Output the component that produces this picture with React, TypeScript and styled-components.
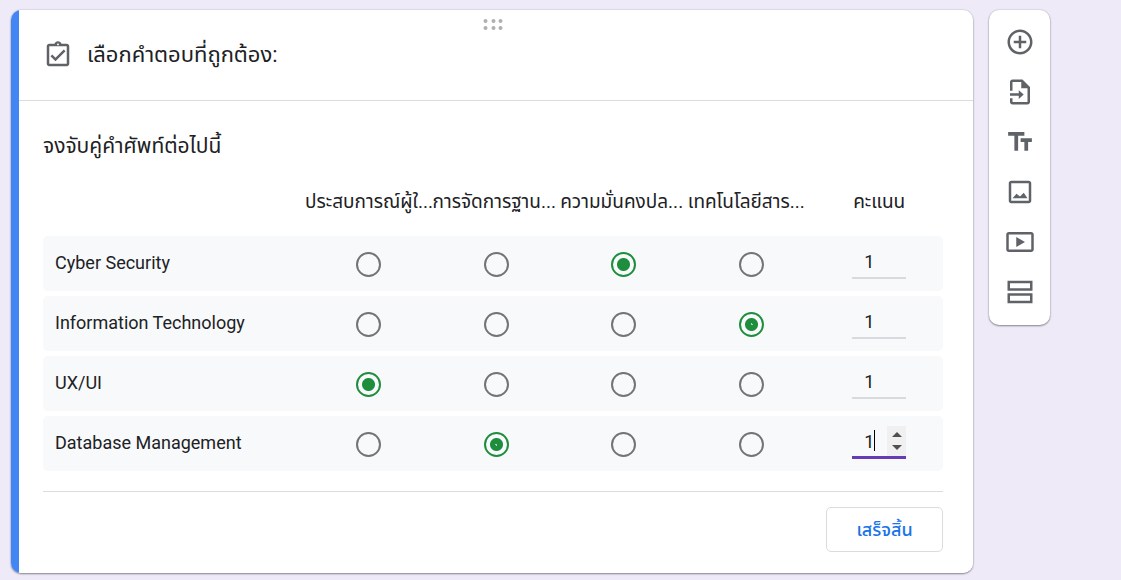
import React, { useState } from 'react';
import styled, { createGlobalStyle, css } from 'styled-components';

const GlobalStyle = createGlobalStyle`
  * { box-sizing: border-box; }
  body {
    margin: 0;
    background: #eeeaf8;
    color: #202124;
    font-family: Roboto, "Noto Sans Thai", "Noto Sans", sans-serif;
    font-size: 18px;
  }
`;

const Page = styled.div`
  display: flex;
  align-items: flex-start;
  gap: 16px;
  padding: 10px 71px 6px 11px;
`;

const raised = css`
  background: #fff;
  border-radius: 10px;
  box-shadow: 0 1px 2px rgba(0, 0, 0, 0.4), 0 0 2px rgba(0, 0, 0, 0.2);
`;

const Card = styled.main`
  ${raised}
  flex: 1;
  min-width: 0;
  padding-left: 8px;
  background: linear-gradient(to right, #4285f4 8px, #fff 8px);
`;

const CardHeader = styled.header`
  display: flex;
  flex-direction: column;
  height: 91px;
  border-bottom: 1px solid #dadce0;
`;

const DragHandle = styled.div`
  display: flex;
  justify-content: center;
  height: 20px;
  padding: 9px 6px 0 0;
`;

const TitleRow = styled.div`
  display: flex;
  align-items: center;
  gap: 14px;
  height: 50px;
  padding-left: 24px;
  color: #5f6368;
`;

const Title = styled.h1`
  margin: 0;
  color: #202124;
  font-size: 22px;
  line-height: 30px;
  font-weight: 400;
`;

const CardBody = styled.div`
  padding: 30px 30px 21px 24px;
`;

const Question = styled.h2`
  margin: 0 0 24px;
  font-size: 21px;
  line-height: 30px;
  font-weight: 400;
`;

const Grid = styled.table`
  width: 100%;
  table-layout: fixed;
  border-collapse: separate;
  border-spacing: 0 5px;
`;

const LabelHead = styled.th`
  width: 262px;
`;

const OptionHead = styled.th<{ $center?: boolean }>`
  height: 41px;
  padding: 0;
  font-size: 19px;
  line-height: 24px;
  font-weight: 400;
  vertical-align: top;
  white-space: nowrap;
  text-align: ${(p) => (p.$center ? 'center' : 'left')};
`;

const Cell = styled.td`
  height: 55px;
  padding: 0;
  background: #f8f9fb;
  text-align: center;
  vertical-align: middle;
  &:last-child { border-radius: 0 5px 5px 0; }
`;

const RowLabel = styled.th`
  padding: 0 12px 2px;
  border-radius: 5px 0 0 5px;
  background: #f8f9fb;
  font-weight: 400;
  text-align: left;
`;

const Radio = styled.input<{ $pinhole: boolean }>`
  appearance: none;
  display: block;
  width: 25px;
  height: 25px;
  margin: 2px auto 0;
  border: 2px solid #737476;
  border-radius: 50%;
  &:checked {
    border-color: #1e8e3e;
    background: radial-gradient(
      circle,
      ${(p) => (p.$pinhole ? '#a5d3b1 0 1px,' : '')} #1e8e3e 1px 6px, transparent 7px
    );
  }
`;

const ScoreField = styled.div<{ $active: boolean }>`
  position: relative;
  display: flex;
  width: 54px;
  height: 33px;
  margin: 0 auto 2px;
  border-bottom: ${(p) => (p.$active ? '3px solid #673ab7' : '2px solid #d9dadd')};
`;

const ScoreInput = styled.input`
  appearance: textfield;
  width: 35px;
  height: 30px;
  padding: 0 0 0 12px;
  border: 0;
  outline: 0;
  background: transparent;
  color: #202124;
  caret-color: transparent;
  font: inherit;
  &::-webkit-inner-spin-button { appearance: none; margin: 0; }
`;

const Caret = styled.span`
  position: absolute;
  left: 22px;
  top: 4px;
  width: 1px;
  height: 21px;
  background: #000;
`;

const Stepper = styled.div`
  display: flex;
  flex-direction: column;
  width: 19px;
  padding: 2px 0;
  background: #f0f0f0;
`;

const Step = styled.button`
  display: flex;
  flex: 1;
  align-items: center;
  justify-content: center;
  padding: 0;
  border: 0;
  background: transparent;
  color: #505050;
`;

const Footer = styled.footer`
  display: flex;
  justify-content: flex-end;
  margin-top: 15px;
  padding-top: 15px;
  border-top: 1px solid #dadce0;
`;

const DoneButton = styled.button`
  width: 117px;
  height: 45px;
  padding: 0;
  border: 1px solid #dadce0;
  border-radius: 5px;
  background: #fff;
  color: #1a73e8;
  font: 500 18px/24px Roboto, "Noto Sans Thai", "Noto Sans", sans-serif;
`;

const Toolbar = styled.nav`
  ${raised}
  display: flex;
  flex-direction: column;
  align-items: center;
  width: 61px;
  padding: 7px 0 8px;
`;

const Tool = styled.button`
  display: flex;
  align-items: center;
  justify-content: center;
  width: 50px;
  height: 50px;
  padding: 0;
  border: 0;
  background: transparent;
  color: #5f6368;
`;

const Icon = ({ d, size = 30 }: { d: string; size?: number }) => (
  <svg width={size} height={size} viewBox="0 0 24 24" fill="currentColor" aria-hidden="true">
    <path fillRule="evenodd" d={d} />
  </svg>
);

const CLIPBOARD =
  'M19 3h-4.18C14.4 1.84 13.3 1 12 1s-2.4.84-2.82 2H5c-1.1 0-2 .9-2 2v14c0 1.1.9 2 2 2h14c1.1 0 2-.9 2-2V5c0-1.1-.9-2-2-2zm-7-.25c.41 0 .75.34.75.75s-.34.75-.75.75-.75-.34-.75-.75.34-.75.75-.75zM19 19H5V5h14v14zM17.99 9l-1.41-1.42-6.59 6.59-2.58-2.57-1.42 1.41 4 3.99z';

const tools = [
  {
    name: 'เพิ่มคำถาม',
    d: 'M13 7h-2v4H7v2h4v4h2v-4h4v-2h-4V7zm-1-5C6.48 2 2 6.48 2 12s4.48 10 10 10 10-4.48 10-10S17.52 2 12 2zm0 18c-4.41 0-8-3.59-8-8s3.59-8 8-8 8 3.59 8 8-3.59 8-8 8z',
  },
  {
    name: 'นำเข้าคำถาม',
    d: 'M14 2H6c-1.1 0-2 .9-2 2v7h2V4h7v5h5v11H6v-3H4v3c0 1.1.9 2 2 2h12c1.1 0 2-.9 2-2V8l-6-6zM4 13v2h7v2.5l4-3.5-4-3.5V13H4z',
  },
  { name: 'เพิ่มชื่อและรายละเอียด', d: 'M2.5 4v3h5v12h3V7h5V4h-13zm19 5h-9v3h3v7h3v-7h3V9z' },
  {
    name: 'เพิ่มรูปภาพ',
    d: 'M19 5v14H5V5h14m0-2H5c-1.1 0-2 .9-2 2v14c0 1.1.9 2 2 2h14c1.1 0 2-.9 2-2V5c0-1.1-.9-2-2-2zM15 12.5l-3 3L9.2 13.3 6 17h12z',
  },
  {
    name: 'เพิ่มวิดีโอ',
    d: 'M21 4H3c-1.1 0-2 .9-2 2v12c0 1.1.9 2 2 2h18c1.1 0 2-.9 2-2V6c0-1.1-.9-2-2-2zm0 14H3V6h18v12zM9 8v8l7-4z',
  },
  { name: 'เพิ่มส่วน', d: 'M2 3v8h20V3H2zm18 6H4V5h16v4zM2 13v8h20v-8H2zm18 6H4v-4h16v4z' },
];

const options = ['ประสบการณ์ผู้ใ...', 'การจัดการฐาน...', 'ความมั่นคงปล...', 'เทคโนโลยีสาร...'];

const questions = [
  { label: 'Cyber Security', answer: 2 },
  { label: 'Information Technology', answer: 3 },
  { label: 'UX/UI', answer: 0 },
  { label: 'Database Management', answer: 1 },
];

export default function App() {
  const [answers, setAnswers] = useState(questions.map((q) => q.answer));
  const [scores, setScores] = useState(questions.map(() => 1));
  const activeRow = 3;

  const setScore = (row: number, value: number) =>
    setScores(scores.map((s, i) => (i === row ? Math.max(0, value) : s)));

  return (
    <>
      <GlobalStyle />
      <Page>
        <Card>
          <CardHeader>
            <DragHandle>
              <svg width="20" height="11" viewBox="0 0 20 11" fill="#b0b0b0" aria-hidden="true">
                {[2, 10, 17].map((x) =>
                  [2, 9].map((y) => <circle key={`${x}-${y}`} cx={x + 0.5} cy={y} r="2" />),
                )}
              </svg>
            </DragHandle>
            <TitleRow>
              <Icon d={CLIPBOARD} />
              <Title>เลือกคำตอบที่ถูกต้อง:</Title>
            </TitleRow>
          </CardHeader>
          <CardBody>
            <Question>จงจับคู่คำศัพท์ต่อไปนี้</Question>
            <Grid>
              <thead>
                <tr>
                  <LabelHead />
                  {options.map((o) => (
                    <OptionHead key={o} scope="col">{o}</OptionHead>
                  ))}
                  <OptionHead scope="col" $center>คะแนน</OptionHead>
                </tr>
              </thead>
              <tbody>
                {questions.map((q, row) => (
                  <tr key={q.label}>
                    <RowLabel scope="row">{q.label}</RowLabel>
                    {options.map((o, col) => (
                      <Cell key={o}>
                        <Radio
                          type="radio"
                          name={`row-${row}`}
                          aria-label={`${q.label}: ${o}`}
                          checked={answers[row] === col}
                          onChange={() => setAnswers(answers.map((a, i) => (i === row ? col : a)))}
                          $pinhole={col % 2 === 1}
                        />
                      </Cell>
                    ))}
                    <Cell>
                      <ScoreField $active={row === activeRow}>
                        <ScoreInput
                          type="number"
                          aria-label={`คะแนน ${q.label}`}
                          value={scores[row]}
                          onChange={(e) => setScore(row, Number(e.target.value))}
                        />
                        {row === activeRow && (
                          <>
                            <Caret />
                            <Stepper>
                              <Step type="button" aria-label="เพิ่ม" onClick={() => setScore(row, scores[row] + 1)}>
                                <svg width="10" height="5" fill="currentColor"><path d="M0 5 5 0l5 5z" /></svg>
                              </Step>
                              <Step type="button" aria-label="ลด" onClick={() => setScore(row, scores[row] - 1)}>
                                <svg width="10" height="5" fill="currentColor"><path d="M0 0h10L5 5z" /></svg>
                              </Step>
                            </Stepper>
                          </>
                        )}
                      </ScoreField>
                    </Cell>
                  </tr>
                ))}
              </tbody>
            </Grid>
            <Footer>
              <DoneButton type="button">เสร็จสิ้น</DoneButton>
            </Footer>
          </CardBody>
        </Card>
        <Toolbar aria-label="เครื่องมือ">
          {tools.map((t) => (
            <Tool key={t.name} type="button" aria-label={t.name}>
              <Icon d={t.d} />
            </Tool>
          ))}
        </Toolbar>
      </Page>
    </>
  );
}
